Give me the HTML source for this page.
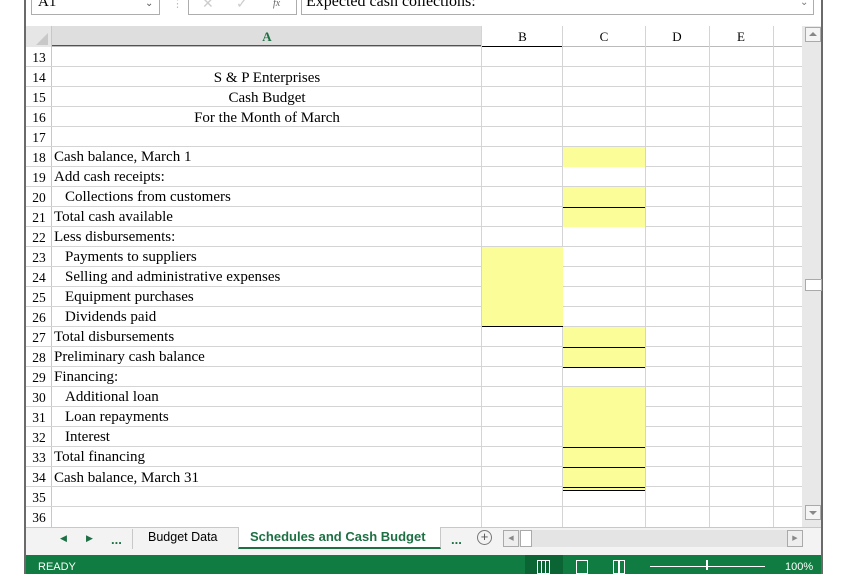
<!DOCTYPE html>
<html><head><meta charset="utf-8"><style>
*{margin:0;padding:0;box-sizing:border-box}
body{width:842px;height:574px;background:#fff;position:relative;overflow:hidden;font-family:"Liberation Serif",serif;font-size:15px;color:#000}
.a{position:absolute}
.h{position:absolute;height:1px;background:#d4d4d4}
.v{position:absolute;width:1px;background:#d4d4d4}
.y{position:absolute;background:#fbfd98}
.k{position:absolute;height:1px;background:#000}
.rn{position:absolute;left:27px;width:24px;text-align:center;font-size:13.5px;line-height:20px;top:1px}
.t{position:absolute;left:54px;line-height:20px;white-space:nowrap;margin-top:1px}
.c{position:absolute;left:52px;width:430px;text-align:center;line-height:20px;margin-top:1px}
.ch{position:absolute;top:27px;height:20px;line-height:20px;text-align:center;font-size:13px}
</style></head><body>
<div class="a" style="left:24px;top:0;width:2px;height:574px;background:#6a6a6a"></div>
<div class="a" style="left:821px;top:0;width:2px;height:574px;background:#6a6a6a"></div>
<div class="a" style="left:31px;top:-6px;width:129px;height:21px;border:1px solid #adadad"></div>
<div class="a" style="left:38px;top:-6px;font-size:15px">A1</div>
<div class="a" style="left:145px;top:-2px;font-size:10px;color:#555">&#8964;</div>
<div class="a" style="left:172px;top:-3px;color:#bbb;font-size:11px">⋮</div>
<div class="a" style="left:188px;top:-6px;width:109px;height:21px;border:1px solid #adadad"></div>
<div class="a" style="left:202px;top:-4px;color:#ccc;font-size:14px">✕</div>
<div class="a" style="left:236px;top:-4px;color:#ccc;font-size:14px">✓</div>
<div class="a" style="left:273px;top:-2px;color:#666;font-size:10px;font-style:italic">fx</div>
<div class="a" style="left:301px;top:-6px;width:513px;height:21px;border:1px solid #adadad"></div>
<div class="a" style="left:306px;top:-7px;font-size:16px">Expected cash collections:</div>
<div class="a" style="left:800px;top:-3px;font-size:10px;color:#777">&#8964;</div>
<div class="a" style="left:26px;top:26px;width:776px;height:21px;background:#fff"></div>
<div class="a" style="left:26px;top:26px;width:26px;height:21px;background:#e6e6e6"></div>
<div class="a" style="left:36px;top:33px;width:0;height:0;border-left:12px solid transparent;border-bottom:12px solid #c8c8c8"></div>
<div class="a" style="left:52px;top:26px;width:430px;height:21px;background:#dedede;border-bottom:2px solid #1d7044"></div>
<div class="ch" style="left:52px;width:430px;color:#1d7044;font-weight:bold">A</div>
<div class="ch" style="left:482px;width:81px">B</div>
<div class="ch" style="left:563px;width:82px">C</div>
<div class="ch" style="left:645px;width:64px">D</div>
<div class="ch" style="left:709px;width:64px">E</div>
<div class="a" style="left:52px;top:46px;width:750px;height:1px;background:#bbb"></div>
<div class="a" style="left:482px;top:46px;width:81px;height:1px;background:#000"></div>
<div class="v" style="left:51px;top:26px;height:501px;background:#c8c8c8"></div>
<div class="v" style="left:481px;top:26px;height:501px"></div>
<div class="v" style="left:562px;top:26px;height:501px"></div>
<div class="v" style="left:645px;top:26px;height:501px"></div>
<div class="v" style="left:709px;top:26px;height:501px"></div>
<div class="v" style="left:773px;top:26px;height:501px"></div>
<div id="hl"></div>
<script>
var s='';for(var i=1;i<=23;i++){var y=47+i*20;s+='<div class="h" style="left:26px;top:'+(y-1)+'px;width:776px"></div>';}
document.getElementById('hl').innerHTML=s;
</script>
<div class="y" style="left:563px;top:147px;width:82px;height:20px"></div>
<div class="y" style="left:563px;top:187px;width:82px;height:40px"></div>
<div class="y" style="left:482px;top:247px;width:81px;height:80px"></div>
<div class="y" style="left:563px;top:327px;width:82px;height:40px"></div>
<div class="y" style="left:563px;top:387px;width:82px;height:103px"></div>
<div class="k" style="left:563px;top:207px;width:82px"></div>
<div class="k" style="left:482px;top:326px;width:81px"></div>
<div class="k" style="left:563px;top:347px;width:82px"></div>
<div class="k" style="left:563px;top:367px;width:82px"></div>
<div class="k" style="left:563px;top:447px;width:82px"></div>
<div class="k" style="left:563px;top:467px;width:82px"></div>
<div class="k" style="left:563px;top:487px;width:82px"></div>
<div class="k" style="left:563px;top:490px;width:82px"></div>
<div class="rn" style="top:48px">13</div><div class="rn" style="top:68px">14</div><div class="rn" style="top:88px">15</div><div class="rn" style="top:108px">16</div><div class="rn" style="top:128px">17</div><div class="rn" style="top:148px">18</div><div class="rn" style="top:168px">19</div><div class="rn" style="top:188px">20</div><div class="rn" style="top:208px">21</div><div class="rn" style="top:228px">22</div><div class="rn" style="top:248px">23</div><div class="rn" style="top:268px">24</div><div class="rn" style="top:288px">25</div><div class="rn" style="top:308px">26</div><div class="rn" style="top:328px">27</div><div class="rn" style="top:348px">28</div><div class="rn" style="top:368px">29</div><div class="rn" style="top:388px">30</div><div class="rn" style="top:408px">31</div><div class="rn" style="top:428px">32</div><div class="rn" style="top:448px">33</div><div class="rn" style="top:468px">34</div><div class="rn" style="top:488px">35</div><div class="rn" style="top:508px">36</div>
<div class="c" style="top:67px">S &amp; P Enterprises</div>
<div class="c" style="top:87px">Cash Budget</div>
<div class="c" style="top:107px">For the Month of March</div>
<div class="t" style="top:146px">Cash balance, March 1</div>
<div class="t" style="top:166px">Add cash receipts:</div>
<div class="t" style="top:186px;left:65px">Collections from customers</div>
<div class="t" style="top:206px">Total cash available</div>
<div class="t" style="top:226px">Less disbursements:</div>
<div class="t" style="top:246px;left:65px">Payments to suppliers</div>
<div class="t" style="top:266px;left:65px">Selling and administrative expenses</div>
<div class="t" style="top:286px;left:65px">Equipment purchases</div>
<div class="t" style="top:306px;left:65px">Dividends paid</div>
<div class="t" style="top:326px">Total disbursements</div>
<div class="t" style="top:346px">Preliminary cash balance</div>
<div class="t" style="top:366px">Financing:</div>
<div class="t" style="top:386px;left:65px">Additional loan</div>
<div class="t" style="top:406px;left:65px">Loan repayments</div>
<div class="t" style="top:426px;left:65px">Interest</div>
<div class="t" style="top:446px">Total financing</div>
<div class="t" style="top:467px">Cash balance, March 31</div>
<div class="a" style="left:802px;top:26px;width:19px;height:501px;background:#e8e8e8"></div>
<div class="a" style="left:805px;top:27px;width:16px;height:15px;background:#f4f4f4;border:1px solid #aaa"></div>
<div class="a" style="left:809px;top:32px;width:0;height:0;border-left:4px solid transparent;border-right:4px solid transparent;border-bottom:4px solid #888"></div>
<div class="a" style="left:805px;top:279px;width:17px;height:12px;background:#fff;border:1px solid #aaa"></div>
<div class="a" style="left:805px;top:505px;width:16px;height:15px;background:#f4f4f4;border:1px solid #aaa"></div>
<div class="a" style="left:809px;top:511px;width:0;height:0;border-left:4px solid transparent;border-right:4px solid transparent;border-top:4px solid #888"></div>
<div class="a" style="left:26px;top:527px;width:795px;height:28px;background:#f3f3f3;border-top:1px solid #c8c8c8"></div>
<div class="a" style="left:60px;top:533px;color:#1d7044;font-size:9px;font-family:'Liberation Sans',sans-serif">◀</div>
<div class="a" style="left:86px;top:533px;color:#1d7044;font-size:9px;font-family:'Liberation Sans',sans-serif">▶</div>
<div class="a" style="left:111px;top:532px;color:#1d7044;font-size:13px;font-weight:bold;font-family:'Liberation Sans',sans-serif">...</div>
<div class="a" style="left:132px;top:529px;width:1px;height:20px;background:#c8c8c8"></div>
<div class="a" style="left:148px;top:530px;font-family:'Liberation Sans',sans-serif;font-size:12.5px">Budget Data</div>
<div class="a" style="left:238px;top:527px;width:203px;height:22px;background:#fff;border-left:1px solid #c8c8c8;border-right:1px solid #c8c8c8;border-bottom:2px solid #1d7044"></div>
<div class="a" style="left:250px;top:529px;font-family:'Liberation Sans',sans-serif;font-size:13px;font-weight:bold;color:#1d7044">Schedules and Cash Budget</div>
<div class="a" style="left:451px;top:532px;color:#1d7044;font-size:13px;font-weight:bold;font-family:'Liberation Sans',sans-serif">...</div>
<div class="a" style="left:477px;top:530px;width:15px;height:15px;border:1px solid #777;border-radius:50%;text-align:center;line-height:12px;font-size:13px;color:#555;font-family:'Liberation Sans',sans-serif">+</div>
<div class="a" style="left:503px;top:530px;width:300px;height:17px;background:#e4e4e4"></div>
<div class="a" style="left:503px;top:530px;width:16px;height:17px;border:1px solid #aaa;background:#eee;font-size:7px;color:#888;text-align:center;line-height:15px">◀</div>
<div class="a" style="left:520px;top:530px;width:12px;height:17px;border:1px solid #aaa;background:#fff"></div>
<div class="a" style="left:787px;top:530px;width:16px;height:17px;border:1px solid #aaa;background:#eee;font-size:7px;color:#888;text-align:center;line-height:15px">▶</div>
<div class="a" style="left:26px;top:555px;width:795px;height:19px;background:#107c41"></div>
<div class="a" style="left:38px;top:561px;color:#fff;font-family:'Liberation Sans',sans-serif;font-size:11px">READY</div>
<div class="a" style="left:525px;top:555px;width:38px;height:19px;background:#0b6434"></div>
<div class="a" style="left:537px;top:560px;width:13px;height:14px;border:1px solid #fff;background:repeating-linear-gradient(90deg,transparent 0 3px,#fff 3px 4px)"></div>
<div class="a" style="left:576px;top:560px;width:12px;height:14px;border:1px solid #fff"></div>
<div class="a" style="left:613px;top:560px;width:12px;height:14px;border:1px solid #fff;background:linear-gradient(90deg,transparent 4px,#fff 4px 6px,transparent 6px)"></div>
<div class="a" style="left:650px;top:566px;width:115px;height:1px;background:#fff"></div>
<div class="a" style="left:706px;top:560px;width:2px;height:10px;background:#fff"></div>
<div class="a" style="left:785px;top:561px;color:#fff;font-family:'Liberation Sans',sans-serif;font-size:11px">100%</div>
</body></html>
